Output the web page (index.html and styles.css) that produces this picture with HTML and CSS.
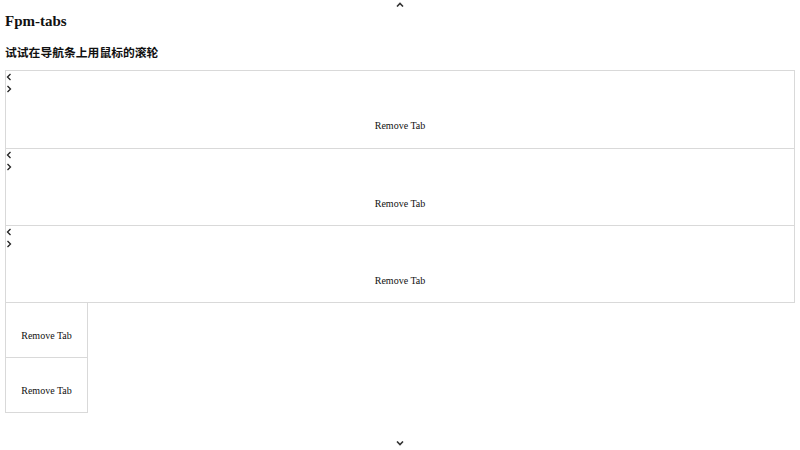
FILE: index.html
```html
<!DOCTYPE html>
<html>
<head>
<meta charset="utf-8">
<link rel="stylesheet" href="styles.css">
</head>
<body>
<div class="scroll-up"><svg width="8" height="5" viewBox="0 0 8 5"><path d="M1 4.5 L4 1.5 L7 4.5" fill="none" stroke="#333" stroke-width="1.6"/></svg></div>
<h1 class="title">Fpm-tabs</h1>
<h2 class="subtitle">试试在导航条上用鼠标的滚轮</h2>
<div class="tabs">
  <div class="tab">
    <div class="nav">
      <div class="arrow"><svg width="6" height="8" viewBox="0 0 6 8"><path d="M4.5 1 L1.5 4 L4.5 7" fill="none" stroke="#222" stroke-width="1.3"/></svg></div>
      <div class="arrow"><svg width="6" height="8" viewBox="0 0 6 8"><path d="M1.5 1 L4.5 4 L1.5 7" fill="none" stroke="#222" stroke-width="1.3"/></svg></div>
    </div>
    <div class="remove">Remove Tab</div>
  </div>
  <div class="tab">
    <div class="nav">
      <div class="arrow"><svg width="6" height="8" viewBox="0 0 6 8"><path d="M4.5 1 L1.5 4 L4.5 7" fill="none" stroke="#222" stroke-width="1.3"/></svg></div>
      <div class="arrow"><svg width="6" height="8" viewBox="0 0 6 8"><path d="M1.5 1 L4.5 4 L1.5 7" fill="none" stroke="#222" stroke-width="1.3"/></svg></div>
    </div>
    <div class="remove">Remove Tab</div>
  </div>
  <div class="tab">
    <div class="nav">
      <div class="arrow"><svg width="6" height="8" viewBox="0 0 6 8"><path d="M4.5 1 L1.5 4 L4.5 7" fill="none" stroke="#222" stroke-width="1.3"/></svg></div>
      <div class="arrow"><svg width="6" height="8" viewBox="0 0 6 8"><path d="M1.5 1 L4.5 4 L1.5 7" fill="none" stroke="#222" stroke-width="1.3"/></svg></div>
    </div>
    <div class="remove">Remove Tab</div>
  </div>
  <div class="tab small"><div class="remove">Remove Tab</div></div>
  <div class="tab small"><div class="remove">Remove Tab</div></div>
</div>
<div class="scroll-down"><svg width="8" height="5" viewBox="0 0 8 5"><path d="M1 0.5 L4 3.5 L7 0.5" fill="none" stroke="#333" stroke-width="1.6"/></svg></div>
</body>
</html>
```
FILE: styles.css
```css
html, body {
  margin: 0;
  padding: 0;
  background: #fff;
}
body {
  padding: 0 5px;
  font-family: "Liberation Serif", "Noto Sans CJK SC", serif;
  color: #111;
}
.title {
  font-size: 15px;
  font-weight: bold;
  margin: 0;
  padding-top: 12px;
  line-height: 18px;
}
.subtitle {
  font-family: "Liberation Sans", "Noto Sans CJK SC", sans-serif;
  font-size: 11.8px;
  font-weight: bold;
  margin: 0;
  padding-top: 14px;
  line-height: 18px;
}
.tabs {
  margin-top: 8px;
  display: flex;
  flex-direction: column;
  align-items: stretch;
}
.tab {
  border: 1px solid #d9d9d9;
  height: 76px;
  display: flex;
  flex-direction: column;
}
.tab:first-child {
  height: 77px;
}
.tab + .tab {
  border-top: 0;
}
.nav {
  display: flex;
  flex-direction: column;
  gap: 4px;
  padding-top: 2px;
}
.arrow {
  height: 8px;
  line-height: 0;
}
.remove {
  font-size: 10px;
  text-align: center;
  margin-top: 27px;
  line-height: 12px;
}
.tab.small {
  width: 81px;
  height: 54px;
}
.tab.small .remove {
  margin-top: 27px;
}
.scroll-up, .scroll-down {
  position: fixed;
  left: 396px;
  width: 8px;
  height: 5px;
  line-height: 0;
}
.scroll-up { top: 2px; }
.scroll-down { top: 441px; }
```
